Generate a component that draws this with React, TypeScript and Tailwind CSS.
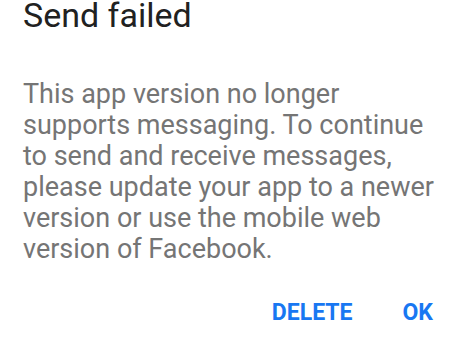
import React from "react";

export default function App() {
  return (
    <div
      className="w-[474px] h-[352px] bg-white overflow-hidden flex flex-col"
      style={{ fontFamily: "Roboto, 'Noto Sans', sans-serif" }}
    >
      <div className="pl-[23px] mt-[-5px] text-[34px] leading-[40px] text-[#212121]">
        Send failed
      </div>
      <div className="pl-[23px] mt-[44px] text-[27px] leading-[31px] text-[#757575]">
        This app version no longer
        <br />
        supports messaging. To continue
        <br />
        to send and receive messages,
        <br />
        please update your app to a newer
        <br />
        version or use the mobile web
        <br />
        version of Facebook.
      </div>
      <div className="flex justify-end gap-[50px] pr-[41px] mt-[33px] text-[23px] leading-[30px] font-bold text-[#1877f2]">
        <span>DELETE</span>
        <span>OK</span>
      </div>
    </div>
  );
}
